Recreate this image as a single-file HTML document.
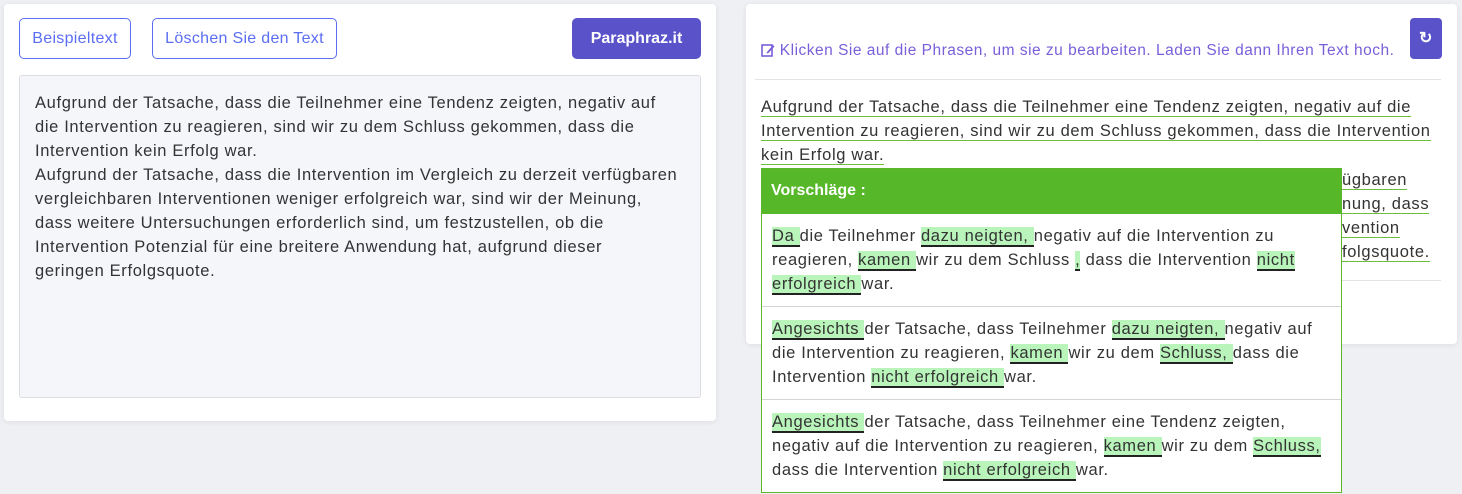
<!DOCTYPE html>
<html><head><meta charset="utf-8"><style>
*{box-sizing:border-box;margin:0;padding:0}
body{width:1462px;height:494px;background:#eef0f4;font-family:"Liberation Sans",sans-serif;position:relative;overflow:hidden;color:#333;letter-spacing:.65px}
.card{position:absolute;background:#fff;border-radius:4px;box-shadow:0 1px 6px rgba(0,0,0,.08)}
.btn{position:absolute;top:18px;height:41px;border:1px solid #5b6ef2;border-radius:5px;color:#5b6ef2;font-size:16px;line-height:39px;text-align:center;background:#fff;white-space:nowrap;letter-spacing:.3px}
.ta{position:absolute;left:19px;top:75px;width:682px;height:323px;background:#f5f6fa;border:1px solid #dcdde2;border-radius:3px;padding:15px 15px;font-size:16.5px;line-height:24px;color:#333;white-space:nowrap}
.rt{position:absolute;left:761px;font-size:16.5px;line-height:24px;color:#333;white-space:nowrap}
.u{border-bottom:1px solid #6cbf3a}
.pop{position:absolute;left:761px;top:168px;width:581px;height:325px;background:#fff;border:1px solid #5cb82a}
.ph{height:45px;background:#56b829;color:#fff;font-weight:bold;font-size:16px;line-height:44px;padding-left:9px;letter-spacing:0}
.it{padding:10px 10px 11px;font-size:16.5px;line-height:24px;border-bottom:1px solid #d4d4d4;color:#333;white-space:nowrap}
.h{background:#b9f5bb;border-bottom:2px solid #222}
</style></head><body>
<div class="card" style="left:4px;top:4px;width:712px;height:417px"></div>
<div class="btn" style="left:19px;width:112px">Beispieltext</div>
<div class="btn" style="left:152px;width:185px">Löschen Sie den Text</div>
<div class="btn" style="left:572px;width:129px;background:#5a52c9;border-color:#5a52c9;color:#fff;font-weight:bold;letter-spacing:0">Paraphraz.it</div>
<div class="ta">Aufgrund der Tatsache, dass die Teilnehmer eine Tendenz zeigten, negativ auf<br>die Intervention zu reagieren, sind wir zu dem Schluss gekommen, dass die<br>Intervention kein Erfolg war.<br>Aufgrund der Tatsache, dass die Intervention im Vergleich zu derzeit verfügbaren<br>vergleichbaren Interventionen weniger erfolgreich war, sind wir der Meinung,<br>dass weitere Untersuchungen erforderlich sind, um festzustellen, ob die<br>Intervention Potenzial für eine breitere Anwendung hat, aufgrund dieser<br>geringen Erfolgsquote.</div>

<div class="card" style="left:746px;top:4px;width:711px;height:340px"></div>
<div style="position:absolute;left:761px;top:41px;font-size:15.5px;color:#7a5fd8;line-height:20px;white-space:nowrap;letter-spacing:.5px"><svg width="14" height="14" viewBox="0 0 14 14" style="vertical-align:-2px"><rect x="1" y="2" width="10" height="11" fill="none" stroke="#7a5fd8" stroke-width="1.6"/><path d="M6 9 L12 2 L13.5 3.5 L7.5 10 L5.5 10.5Z" fill="#7a5fd8"/></svg> Klicken Sie auf die Phrasen, um sie zu bearbeiten. Laden Sie dann Ihren Text hoch.</div>
<div style="position:absolute;left:1410px;top:18px;width:32px;height:41px;background:#5a52c9;border-radius:4px;color:#fff;text-align:center;line-height:41px;font-size:16px;font-weight:bold">↻</div>
<div style="position:absolute;left:755px;top:79px;width:686px;height:1px;background:#e3e3e3"></div>
<div class="rt" style="top:95px"><span class="u">Aufgrund der Tatsache, dass die Teilnehmer eine Tendenz zeigten, negativ auf die</span><br><span class="u">Intervention zu reagieren, sind wir zu dem Schluss gekommen, dass die Intervention</span><br><span class="u">kein Erfolg war.</span></div>
<div class="rt" style="top:168px;left:1342px;line-height:24px"><span class="u">ügbaren</span><br><span class="u">nung, dass</span><br><span class="u">vention</span><br><span class="u">folgsquote.</span></div>
<div style="position:absolute;left:1342px;top:280px;width:99px;height:1px;background:#e3e3e3"></div>

<div class="pop">
<div class="ph">Vorschläge :</div>
<div class="it" style="height:93px"><span class="h">Da </span>die Teilnehmer <span class="h">dazu neigten, </span>negativ auf die Intervention zu<br>reagieren, <span class="h">kamen </span>wir zu dem Schluss <span class="h">,</span> dass die Intervention <span class="h">nicht</span><br><span class="h">erfolgreich </span>war.</div>
<div class="it" style="height:93px"><span class="h">Angesichts </span>der Tatsache, dass Teilnehmer <span class="h">dazu neigten, </span>negativ auf<br>die Intervention zu reagieren, <span class="h">kamen </span>wir zu dem <span class="h">Schluss, </span>dass die<br>Intervention <span class="h">nicht erfolgreich </span>war.</div>
<div class="it" style="border:none"><span class="h">Angesichts </span>der Tatsache, dass Teilnehmer eine Tendenz zeigten,<br>negativ auf die Intervention zu reagieren, <span class="h">kamen </span>wir zu dem <span class="h">Schluss,</span><br>dass die Intervention <span class="h">nicht erfolgreich </span>war.</div>
</div>
</body></html>
